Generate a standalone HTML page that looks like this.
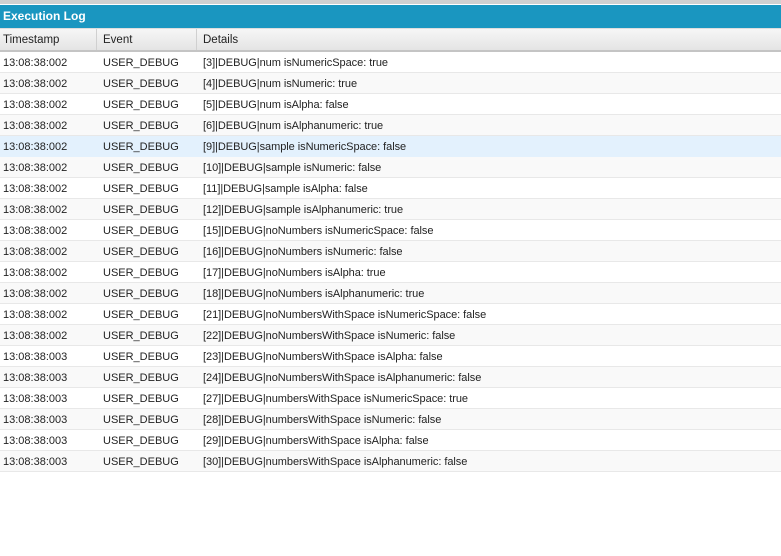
<!DOCTYPE html>
<html><head><style>
body{margin:0;width:781px;height:556px;background:#fff;font-family:"Liberation Sans",sans-serif;font-size:11px;color:#222;overflow:hidden;position:relative}
.top{position:absolute;left:0;top:0;width:781px;height:4px;background:#d0d0d0}
.title{position:absolute;left:0;top:5px;width:781px;height:23px;background:#1a96c0;color:#fff;font-weight:bold;font-size:12px;line-height:23px;padding-left:3px;box-sizing:border-box}
.hdr{position:absolute;left:0;top:28px;width:781px;height:24px;background:linear-gradient(#f6f6f6,#e4e4e4);border-top:1px solid #ddd;border-bottom:2px solid #c4c4c4;box-sizing:border-box}
.hdr div{position:absolute;top:0;height:21px;line-height:23px;padding-left:3px;border-right:1px solid #d0d0d0;box-sizing:border-box;font-size:11.5px}
.rows{position:absolute;left:0;top:52px;width:781px}
.r{height:21px;border-bottom:1px solid #e8e8e8;box-sizing:border-box;position:relative;line-height:21px}
.r:nth-child(even){background:#f9f9f9}
.r.h{background:#e3f1fd;border-bottom-color:#e3f1fd}
.r span{position:absolute;top:1px}
.a{left:3px}.b{left:103px}.c{left:203px;letter-spacing:-0.05px}
</style></head><body>
<div class="top"></div>
<div class="title">Execution Log</div>
<div class="hdr"><div style="left:0;width:97px">Timestamp</div><div style="left:97px;width:100px;padding-left:6px">Event</div><div style="left:197px;width:584px;border-right:none;padding-left:6px">Details</div></div>
<div class="rows">
<div class="r"><span class="a">13:08:38:002</span><span class="b">USER_DEBUG</span><span class="c">[3]|DEBUG|num isNumericSpace: true</span></div>
<div class="r"><span class="a">13:08:38:002</span><span class="b">USER_DEBUG</span><span class="c">[4]|DEBUG|num isNumeric: true</span></div>
<div class="r"><span class="a">13:08:38:002</span><span class="b">USER_DEBUG</span><span class="c">[5]|DEBUG|num isAlpha: false</span></div>
<div class="r"><span class="a">13:08:38:002</span><span class="b">USER_DEBUG</span><span class="c">[6]|DEBUG|num isAlphanumeric: true</span></div>
<div class="r h"><span class="a">13:08:38:002</span><span class="b">USER_DEBUG</span><span class="c">[9]|DEBUG|sample isNumericSpace: false</span></div>
<div class="r"><span class="a">13:08:38:002</span><span class="b">USER_DEBUG</span><span class="c">[10]|DEBUG|sample isNumeric: false</span></div>
<div class="r"><span class="a">13:08:38:002</span><span class="b">USER_DEBUG</span><span class="c">[11]|DEBUG|sample isAlpha: false</span></div>
<div class="r"><span class="a">13:08:38:002</span><span class="b">USER_DEBUG</span><span class="c">[12]|DEBUG|sample isAlphanumeric: true</span></div>
<div class="r"><span class="a">13:08:38:002</span><span class="b">USER_DEBUG</span><span class="c">[15]|DEBUG|noNumbers isNumericSpace: false</span></div>
<div class="r"><span class="a">13:08:38:002</span><span class="b">USER_DEBUG</span><span class="c">[16]|DEBUG|noNumbers isNumeric: false</span></div>
<div class="r"><span class="a">13:08:38:002</span><span class="b">USER_DEBUG</span><span class="c">[17]|DEBUG|noNumbers isAlpha: true</span></div>
<div class="r"><span class="a">13:08:38:002</span><span class="b">USER_DEBUG</span><span class="c">[18]|DEBUG|noNumbers isAlphanumeric: true</span></div>
<div class="r"><span class="a">13:08:38:002</span><span class="b">USER_DEBUG</span><span class="c">[21]|DEBUG|noNumbersWithSpace isNumericSpace: false</span></div>
<div class="r"><span class="a">13:08:38:002</span><span class="b">USER_DEBUG</span><span class="c">[22]|DEBUG|noNumbersWithSpace isNumeric: false</span></div>
<div class="r"><span class="a">13:08:38:003</span><span class="b">USER_DEBUG</span><span class="c">[23]|DEBUG|noNumbersWithSpace isAlpha: false</span></div>
<div class="r"><span class="a">13:08:38:003</span><span class="b">USER_DEBUG</span><span class="c">[24]|DEBUG|noNumbersWithSpace isAlphanumeric: false</span></div>
<div class="r"><span class="a">13:08:38:003</span><span class="b">USER_DEBUG</span><span class="c">[27]|DEBUG|numbersWithSpace isNumericSpace: true</span></div>
<div class="r"><span class="a">13:08:38:003</span><span class="b">USER_DEBUG</span><span class="c">[28]|DEBUG|numbersWithSpace isNumeric: false</span></div>
<div class="r"><span class="a">13:08:38:003</span><span class="b">USER_DEBUG</span><span class="c">[29]|DEBUG|numbersWithSpace isAlpha: false</span></div>
<div class="r"><span class="a">13:08:38:003</span><span class="b">USER_DEBUG</span><span class="c">[30]|DEBUG|numbersWithSpace isAlphanumeric: false</span></div>
</div>
</body></html>
